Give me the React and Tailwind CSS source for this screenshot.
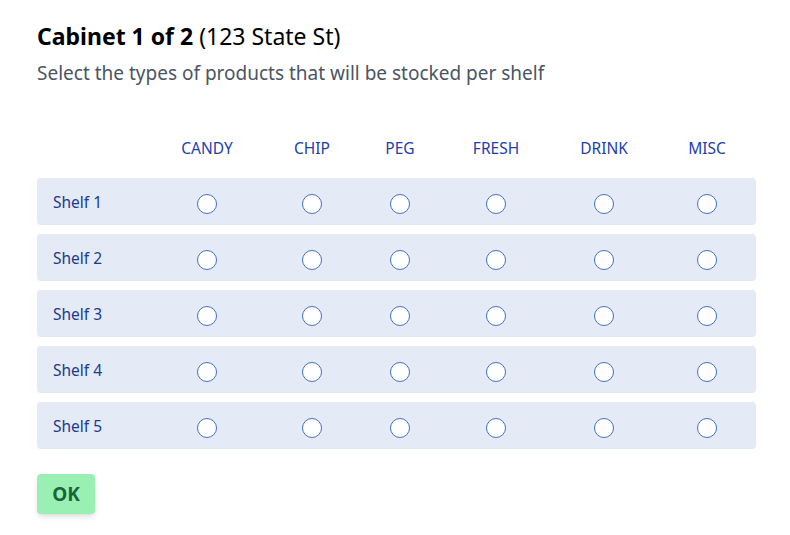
import { useState } from 'react';

const TYPES = ['CANDY', 'CHIP', 'PEG', 'FRESH', 'DRINK', 'MISC'];
const SHELVES = [1, 2, 3, 4, 5];

const COLS = 'grid grid-cols-[111px_118px_92px_84px_108px_108px_98px]';

function Radio({ checked, onChange }) {
  return (
    <button
      type="button"
      onClick={onChange}
      className="w-5 h-5 rounded-full border-[1.6px] border-[#4270c8] bg-white flex items-center justify-center cursor-pointer"
    >
      {checked && <span className="w-2.5 h-2.5 rounded-full bg-[#4270c8]" />}
    </button>
  );
}

export default function App() {
  const [picked, setPicked] = useState({});

  return (
    <div className="min-h-[535px] bg-white pl-[37px] pr-[34px] pt-[22px] font-['Noto_Sans','Open_Sans',sans-serif]">
      <h1 className="text-[23px] leading-[28px] text-black">
        <span className="font-bold">Cabinet 1 of 2</span> (123 State St)
      </h1>
      <p className="mt-[11px] text-[19px] leading-[24px] text-[#4b5563]">
        Select the types of products that will be stocked per shelf
      </p>

      <div className={`${COLS} mt-[47px] h-[34px] items-center text-[15.5px] text-[#1e40af]`}>
        <div />
        {TYPES.map((t) => (
          <div key={t} className="text-center">{t}</div>
        ))}
      </div>

      <div className="mt-[12px] flex flex-col gap-[9px]">
        {SHELVES.map((s) => (
          <div key={s} className={`${COLS} h-[47px] items-center rounded bg-[#e4eaf6]`}>
            <div className="pl-4 pt-[3px] text-[15.5px] text-[#1e3a8a]">Shelf {s}</div>
            {TYPES.map((t) => (
              <div key={t} className="flex justify-center pt-[4px]">
                <Radio
                  checked={picked[s] === t}
                  onChange={() => setPicked({ ...picked, [s]: t })}
                />
              </div>
            ))}
          </div>
        ))}
      </div>

      <button
        type="button"
        className="mt-[25px] w-[58px] h-10 rounded bg-[#9af0b3] text-[19px] font-bold text-[#17663a] shadow-md"
      >
        OK
      </button>
    </div>
  );
}
